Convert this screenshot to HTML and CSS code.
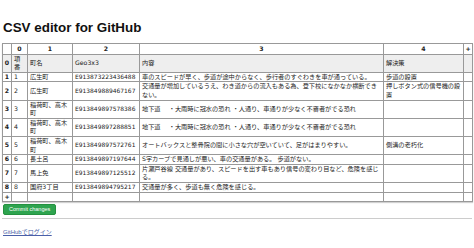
FILE: index.html
```html
<!DOCTYPE html>
<html lang="ja">
<head>
<meta charset="utf-8">
<title>CSV editor for GitHub</title>
<link rel="stylesheet" href="styles.css">
</head>
<body>
<div class="page">
  <h1 class="title">CSV editor for GitHub</h1>
  <table class="grid">
    <colgroup>
      <col class="w-rh"><col class="w-c0"><col class="w-c1"><col class="w-c2"><col class="w-c3"><col class="w-c4"><col class="w-add">
    </colgroup>
    <thead>
      <tr class="nums">
        <th></th><th>0</th><th>1</th><th>2</th><th>3</th><th>4</th><th class="add">+</th>
      </tr>
    </thead>
    <tbody>
      <tr class="head">
        <th class="rh">0</th><td>項番</td><td>町名</td><td>Geo3x3</td><td>内容</td><td>解決策</td><td></td>
      </tr>
      <tr>
        <th class="rh">1</th><td>1</td><td>広生町</td><td class="geo">E913873223436488</td><td>車のスピードが早く、歩道が途中からなく、歩行者のすぐわきを車が通っている。</td><td>歩道の設置</td><td></td>
      </tr>
      <tr>
        <th class="rh">2</th><td>2</td><td>広生町</td><td class="geo">E913849889467167</td><td>交通量が増加しているうえ、わき道からの流入もある為、登下校になかなか横断できない。</td><td>押しボタン式の信号機の設置</td><td></td>
      </tr>
      <tr>
        <th class="rh">3</th><td>3</td><td>稲荷町、高木町</td><td class="geo">E913849897578386</td><td>地下道　 ・大雨時に冠水の恐れ ・人通り、車通りが少なく不審者がでる恐れ</td><td></td><td></td>
      </tr>
      <tr>
        <th class="rh">4</th><td>4</td><td>稲荷町、高木町</td><td class="geo">E913849897288851</td><td>地下道　 ・大雨時に冠水の恐れ ・人通り、車通りが少なく不審者がでる恐れ</td><td></td><td></td>
      </tr>
      <tr>
        <th class="rh">5</th><td>5</td><td>稲荷町、高木町</td><td class="geo">E913849897572761</td><td>オートバックスと整骨院の間に小さな穴が空いていて、足がはまりやすい。</td><td>側溝の老朽化</td><td></td>
      </tr>
      <tr>
        <th class="rh">6</th><td>6</td><td>長土呂</td><td class="geo">E913849897197644</td><td>S字カーブで見通しが悪い、車の交通量がある。 歩道がない。</td><td></td><td></td>
      </tr>
      <tr>
        <th class="rh">7</th><td>7</td><td>馬上免</td><td class="geo">E913849897125512</td><td>片瀬戸谷線 交通量があり、スピードを出す車もあり信号の変わり目など、危険を感じる。</td><td></td><td></td>
      </tr>
      <tr>
        <th class="rh">8</th><td>8</td><td>国府3丁目</td><td class="geo">E913849894795217</td><td>交通量が多く、歩道も無く危険を感じる。</td><td></td><td></td>
      </tr>
      <tr>
        <th class="rh">+</th><td></td><td></td><td></td><td></td><td></td><td></td>
      </tr>
    </tbody>
  </table>
  <button class="commit" type="button">Commit changes</button>
  <hr class="rule">
  <a class="login" href="#">GitHubでログイン</a>
</div>
</body>
</html>
```

FILE: styles.css
```css
html, body {
  margin: 0;
  padding: 0;
  background: #fff;
}

.page {
  padding: 0 2px;
  font-family: "DejaVu Sans", "Noto Sans CJK JP", sans-serif;
  color: #222;
}

.title {
  margin: 20px 0 7px 1px;
  font-family: "Liberation Sans", Arial, sans-serif;
  font-weight: bold;
  font-size: 13.4px;
  line-height: 16px;
  color: #111;
}

.grid {
  width: 470px;
  table-layout: fixed;
  border-collapse: collapse;
  font-size: 6.2px;
  line-height: 8.6px;
  box-shadow: 0 1px 1px rgba(0, 0, 0, 0.18);
}

.w-rh { width: 9px; }
.w-c0 { width: 16px; }
.w-c1 { width: 45px; }
.w-c2 { width: 67px; }
.w-c3 { width: 244px; }
.w-c4 { width: 80px; }
.w-add { width: 9px; }

.grid th,
.grid td {
  border: 1px solid #999;
  padding: 0 2px;
  vertical-align: middle;
  text-align: left;
  font-weight: normal;
  overflow: hidden;
  word-break: break-all;
}

.grid td.geo {
  font-size: 5.95px;
  white-space: nowrap;
  word-break: normal;
  padding: 0 1px 0 2px;
}

.grid .nums th {
  text-align: center;
  font-weight: bold;
  padding: 0.5px 1px;
}

.grid th.rh {
  text-align: center;
  font-weight: bold;
  padding: 0;
}

.grid .head th,
.grid .head td {
  background: #eee;
}

.commit {
  display: block;
  margin: 2px 0 0 1px;
  padding: 0 5px;
  height: 11px;
  border: 1px solid #24913f;
  border-radius: 2px;
  background: #2ea44f;
  color: #fff;
  font-family: "Liberation Sans", Arial, sans-serif;
  font-size: 5.5px;
  line-height: 9px;
}

.rule {
  margin: 3px 0 0 0;
  width: 470px;
  border: 0;
  border-top: 1px solid #ccc;
  height: 0;
}

.login {
  display: inline-block;
  margin: 1px 0 0 1px;
  font-family: "Liberation Sans", "Noto Sans CJK JP", sans-serif;
  font-size: 6px;
  line-height: 8px;
  color: #4a5fa8;
  text-decoration: underline;
}
```
